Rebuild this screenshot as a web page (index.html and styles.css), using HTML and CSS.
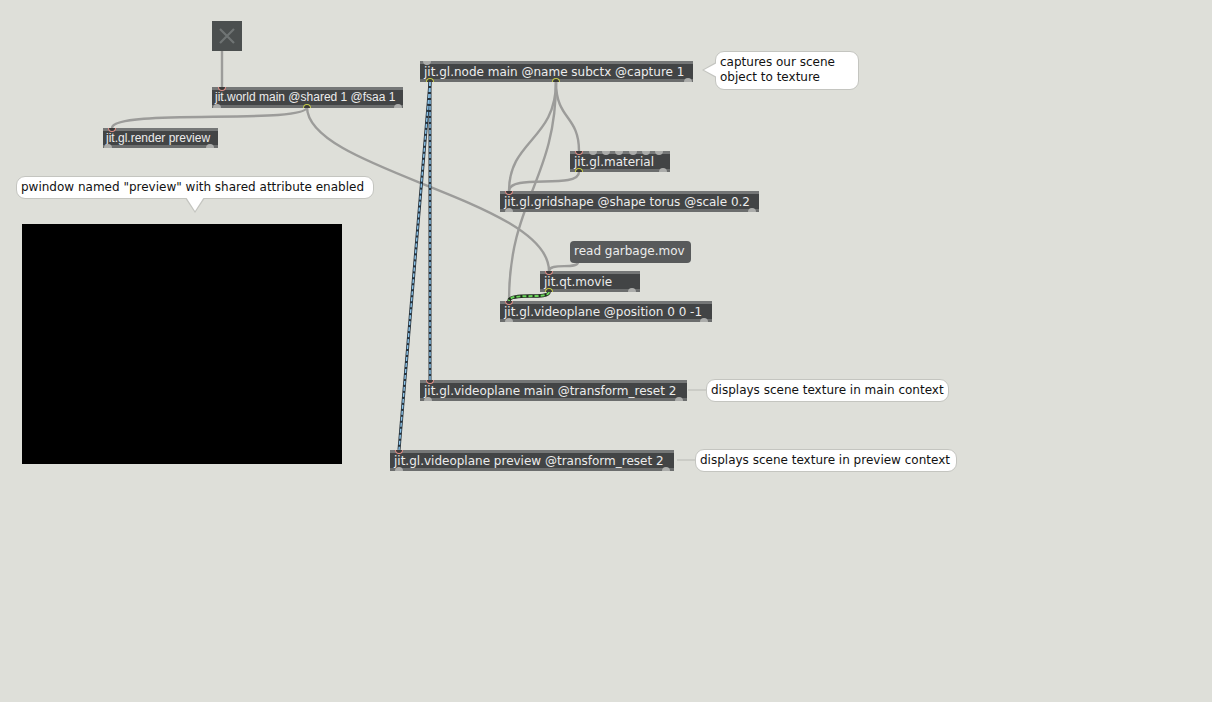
FILE: index.html
```html
<!DOCTYPE html>
<html>
<head>
<meta charset="utf-8">
<link rel="stylesheet" href="styles.css">
</head>
<body>
<div class="canvas">
  <svg class="cords" width="1212" height="702" viewBox="0 0 1212 702">
    <g class="gray">
      <path d="M222 51 L222 87"/>
      <path d="M307 107 C307 125 112 108 112 128"/>
      <path d="M307 107 C307 170 549 200 549 271"/>
      <path d="M578 262 C578 270 549 262 549 271"/>
      <path d="M556 82 C556 120 579 115 579 151"/>
      <path d="M556 82 C556 140 509 140 509 191"/>
      <path d="M556 82 C556 180 509 200 509 301"/>
      <path d="M579 172 C579 190 509 173 509 191"/>
    </g>
    <g class="jit-under">
      <path d="M430 82 L430 380"/>
      <path d="M430 82 L399 450"/>
    </g>
    <g class="jit-over">
      <path d="M430 82 L430 380"/>
      <path d="M430 82 L399 450"/>
    </g>
    <path class="green-under" d="M549 292 C549 300 509 292 509 301"/>
    <path class="green-over" d="M549 292 C549 300 509 292 509 301"/>
    <g class="tails">
      <path d="M688 390 L706 390"/>
      <path d="M677 460 L695 460"/>
    </g>
  </svg>

  <div class="toggle t-main">
    <svg width="30" height="30" viewBox="0 0 30 30"><path d="M8 8 L22 22 M22 8 L8 22"/></svg>
  </div>

  <div class="obj o-world arial">jit.world main @shared 1 @fsaa 1
    <span class="in hot" style="left:6px"></span>
    <span class="out" style="left:1px"></span>
    <span class="out con" style="left:91px"></span>
    <span class="out" style="right:1px"></span>
  </div>

  <div class="obj o-render arial">jit.gl.render preview
    <span class="in hot" style="left:5px"></span>
    <span class="out" style="left:1px"></span>
    <span class="out" style="right:4px"></span>
  </div>

  <div class="bubble b-pwin">pwindow named "preview" with shared attribute enabled<span class="tail-down"></span><span class="tail-down inner"></span></div>

  <div class="pwindow"></div>

  <div class="obj o-node">jit.gl.node main @name subctx @capture 1
    <span class="in" style="left:3px"></span>
    <span class="out con" style="left:6px"></span>
    <span class="out con" style="left:132px"></span>
    <span class="out" style="right:1px"></span>
  </div>

  <div class="bubble b-capture">captures our scene<br>object to texture<span class="tail-left"></span><span class="tail-left inner"></span></div>

  <div class="obj o-material">jit.gl.material
    <span class="in hot" style="left:5px"></span>
    <span class="in" style="left:19px"></span>
    <span class="in" style="left:32px"></span>
    <span class="in" style="left:45px"></span>
    <span class="in" style="left:59px"></span>
    <span class="in" style="left:72px"></span>
    <span class="in" style="left:85px"></span>
    <span class="out con" style="left:5px"></span>
    <span class="out" style="right:3px"></span>
  </div>

  <div class="obj o-grid">jit.gl.gridshape @shape torus @scale 0.2
    <span class="in hot" style="left:5px"></span>
    <span class="out" style="left:5px"></span>
    <span class="out" style="right:3px"></span>
  </div>

  <div class="msg m-read">read garbage.mov</div>

  <div class="obj o-movie">jit.qt.movie
    <span class="in hot" style="left:5px"></span>
    <span class="out con" style="left:5px"></span>
    <span class="out" style="right:4px"></span>
  </div>

  <div class="obj o-vpos">jit.gl.videoplane @position 0 0 -1
    <span class="in hot" style="left:5px"></span>
    <span class="out" style="left:5px"></span>
    <span class="out" style="right:4px"></span>
  </div>

  <div class="obj o-vmain">jit.gl.videoplane main @transform_reset 2
    <span class="in hot" style="left:6px"></span>
    <span class="out" style="left:4px"></span>
    <span class="out" style="right:4px"></span>
  </div>

  <div class="bubble b-main">displays scene texture in main context</div>

  <div class="obj o-vprev">jit.gl.videoplane preview @transform_reset 2
    <span class="in hot" style="left:5px"></span>
    <span class="out" style="left:5px"></span>
    <span class="out" style="right:4px"></span>
  </div>

  <div class="bubble b-prev">displays scene texture in preview context</div>
</div>
</body>
</html>
```

FILE: styles.css
```css
html, body {
  margin: 0;
  padding: 0;
  background: #dedfd9;
}

.canvas {
  position: relative;
  width: 1212px;
  height: 702px;
  overflow: hidden;
  background: #dedfd9;
  font-family: "DejaVu Sans", Verdana, sans-serif;
}

.cords {
  position: absolute;
  left: 0;
  top: 0;
}

.cords .gray path {
  fill: none;
  stroke: #9c9c9a;
  stroke-width: 2.4;
  stroke-linecap: round;
}

.cords .jit-under path {
  fill: none;
  stroke: #26323c;
  stroke-width: 3;
}

.cords .jit-over path {
  fill: none;
  stroke: #8cc4ea;
  stroke-width: 1.4;
  stroke-dasharray: 4 2;
}

.cords .green-under {
  fill: none;
  stroke: #1e2a1c;
  stroke-width: 3.5;
}

.cords .green-over {
  fill: none;
  stroke: #6ad45a;
  stroke-width: 2;
  stroke-dasharray: 4 2;
}

.cords .tails path {
  fill: none;
  stroke: #b8b9b4;
  stroke-width: 1;
}

/* toggle */
.toggle {
  position: absolute;
  width: 30px;
  height: 30px;
  background: #4b4f4f;
}

.toggle svg {
  display: block;
}

.toggle path {
  stroke: #6f7474;
  stroke-width: 2.2;
  fill: none;
}

.t-main { left: 212px; top: 21px; }

/* object boxes */
.obj {
  position: absolute;
  box-sizing: border-box;
  height: 21px;
  padding: 0 0 0 4px;
  background: #424445;
  border-top: 3px solid #757777;
  border-bottom: 3px solid #6b6d6d;
  color: #ececec;
  font-size: 12px;
  line-height: 16px;
  white-space: nowrap;
}

.arial {
  font-family: "Liberation Sans", Arial, sans-serif;
  font-size: 12px;
  line-height: 14px;
  padding-left: 3px;
}

.in, .out {
  position: absolute;
  width: 8px;
  height: 4px;
  box-sizing: border-box;
}

.in {
  top: -3px;
  border-radius: 0 0 4px 4px;
  background: #acadab;
}

.out {
  bottom: -3px;
  border-radius: 4px 4px 0 0;
  background: #acadab;
}

.in.hot {
  background: #3a3a3a;
  border: 1px solid #e08e86;
  border-top: none;
}

.out.con {
  background: #3a3a3a;
  border: 1px solid #c6cc48;
  border-bottom: none;
}

.o-world { left: 212px; top: 87px; width: 191px; }
.o-render { left: 103px; top: 128px; width: 115px; height: 20px; }
.o-node { left: 420px; top: 61px; width: 273px; }
.o-material { left: 570px; top: 151px; width: 100px; }
.o-grid { left: 500px; top: 191px; width: 259px; }
.o-movie { left: 540px; top: 271px; width: 100px; }
.o-vpos { left: 500px; top: 301px; width: 212px; }
.o-vmain { left: 420px; top: 380px; width: 267px; }
.o-vprev { left: 390px; top: 450px; width: 284px; }

/* message box */
.msg {
  position: absolute;
  box-sizing: border-box;
  height: 22px;
  padding: 3px 0 0 4px;
  background: #585a5b;
  border-radius: 4px;
  color: #ececec;
  font-size: 12px;
  line-height: 15px;
  white-space: nowrap;
}

.m-read { left: 570px; top: 241px; width: 121px; }

/* comment bubbles */
.bubble {
  position: absolute;
  box-sizing: border-box;
  background: #ffffff;
  border: 1px solid #c4c5c0;
  border-radius: 9px;
  color: #111;
  font-size: 12px;
  line-height: 15px;
  padding: 3px 0 0 4px;
  white-space: nowrap;
}

.b-pwin { left: 16px; top: 176px; width: 358px; height: 23px; }
.b-capture { left: 715px; top: 51px; width: 144px; height: 39px; padding-top: 3px; line-height: 15px; }
.b-main { left: 706px; top: 379px; width: 243px; height: 23px; }
.b-prev { left: 695px; top: 449px; width: 262px; height: 23px; }

.tail-down {
  position: absolute;
  left: 168px;
  top: 21px;
  width: 0;
  height: 0;
  border-left: 10px solid transparent;
  border-right: 10px solid transparent;
  border-top: 15px solid #c4c5c0;
}

.tail-down.inner {
  left: 169px;
  top: 20px;
  border-left-width: 9px;
  border-right-width: 9px;
  border-top: 14px solid #ffffff;
}

.tail-left {
  position: absolute;
  left: -14px;
  top: 10px;
  width: 0;
  height: 0;
  border-top: 8px solid transparent;
  border-bottom: 8px solid transparent;
  border-right: 14px solid #c4c5c0;
}

.tail-left.inner {
  left: -12px;
  top: 11px;
  border-top-width: 7px;
  border-bottom-width: 7px;
  border-right: 13px solid #ffffff;
}

.pwindow {
  position: absolute;
  left: 22px;
  top: 224px;
  width: 320px;
  height: 240px;
  background: #000;
}
```
